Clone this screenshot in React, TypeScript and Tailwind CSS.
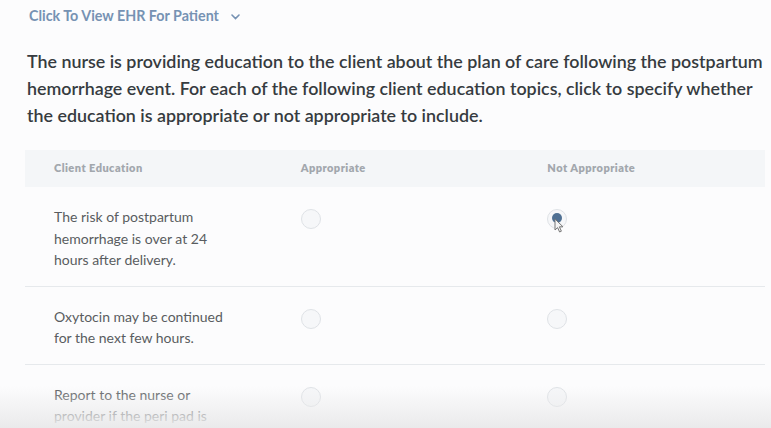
import React from "react";

const rows: { lines: string[]; selected: number | null }[] = [
  { lines: ["The risk of postpartum", "hemorrhage is over at 24", "hours after delivery."], selected: 1 },
  { lines: ["Oxytocin may be continued", "for the next few hours."], selected: null },
  { lines: ["Report to the nurse or", "provider if the peri pad is", "saturated in 15 minutes."], selected: null },
];

function Radio({ checked }: { checked: boolean }) {
  return (
    <div className="relative w-[20px] h-[20px] rounded-full border border-[#dfe2e6] bg-[#f6f7f9]">
      {checked && (
        <>
          <div className="absolute left-[4px] top-[3px] w-[10px] h-[10px] rounded-full bg-[#4f7093]" />
          <svg className="absolute left-[6px] top-[8px]" width="10" height="15" viewBox="0 0 10 15">
            <path d="M1 1 L1 12 L3.6 9.6 L5.6 14 L7.4 13.2 L5.4 8.8 L9 8.8 Z" fill="#f4f4f4" stroke="#777" strokeWidth="1" strokeLinejoin="round" />
          </svg>
        </>
      )}
    </div>
  );
}

export default function App() {
  return (
    <div
      className="relative h-[428px] w-[771px] overflow-hidden bg-[#fcfcfd]"
      style={{ fontFamily: "Lato, 'Open Sans', sans-serif" }}
    >
      <div className="pl-[25px] pr-[6px]">
        <div className="flex items-center gap-[12px] pl-[4px] pt-[6px] h-[26px] text-[14.3px] leading-[20px] font-bold text-[#7692b3]">
          <span>Click To View EHR For Patient</span>
          <svg width="9" height="6" viewBox="0 0 9 6" className="mt-[1px]">
            <path d="M1 1 L4.5 4.5 L8 1" fill="none" stroke="#7692b3" strokeWidth="1.6" strokeLinecap="round" />
          </svg>
        </div>
        <h1 className="mt-[22px] pl-[2px] text-[17.85px] leading-[27px] font-semibold text-[#363b40]">
          The nurse is providing education to the client about the plan of care following the postpartum hemorrhage event. For each of the following client education topics, click to specify whether the education is appropriate or not appropriate to include.
        </h1>
        <div className="mt-[21px]">
          <div className="grid grid-cols-3 h-[37px] items-center bg-[#f4f6f8] text-[11px] tracking-[0.45px] font-extrabold text-[#a2a7ad]">
            <div className="pl-[29px]">Client Education</div>
            <div className="pl-[29px]">Appropriate</div>
            <div className="pl-[29px]">Not Appropriate</div>
          </div>
          {rows.map((r, i) => (
            <div key={i} className="grid grid-cols-3 border-b border-[#e6e9ec] pt-[19px] pb-[15px]">
              <div className="pl-[29px] text-[14px] leading-[21.5px] text-[#595c60]">
                {r.lines.map((l, j) => (
                  <div key={j}>{l}</div>
                ))}
              </div>
              <div className="pl-[29px] pt-[3px]">
                <Radio checked={r.selected === 0} />
              </div>
              <div className="pl-[29px] pt-[3px]">
                <Radio checked={r.selected === 1} />
              </div>
            </div>
          ))}
        </div>
      </div>
      <div className="pointer-events-none absolute left-0 right-0 bottom-0 h-[42px] bg-gradient-to-b from-[#fcfcfd00] to-[#eaeaeb]" />
    </div>
  );
}
